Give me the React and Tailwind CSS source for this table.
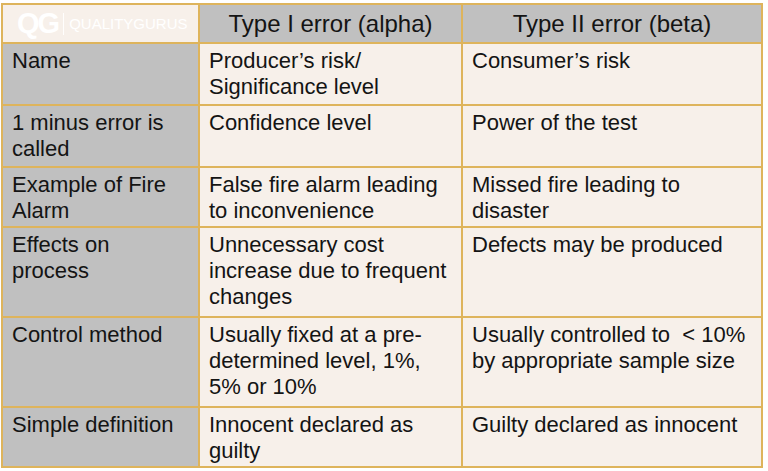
import React from "react";

const rows = [
  ["Name", "Producer’s risk/\nSignificance level", "Consumer’s risk"],
  ["1 minus error is\ncalled", "Confidence level", "Power of the test"],
  ["Example of Fire\nAlarm", "False fire alarm leading\nto inconvenience", "Missed fire leading to\ndisaster"],
  ["Effects on\nprocess", "Unnecessary cost\nincrease due to frequent\nchanges", "Defects may be produced"],
  ["Control method", "Usually fixed at a pre-\ndetermined level, 1%,\n5% or 10%", "Usually controlled to  < 10%\nby appropriate sample size"],
  ["Simple definition", "Innocent declared as\nguilty", "Guilty declared as innocent"],
];

function Cell({ text, gray }) {
  return (
    <div
      className={`${gray ? "bg-[#c0c0c0]" : "bg-[#f7f0ea]"} pl-[9px] pt-[4px] text-[22px] leading-[26px] text-[#141414] whitespace-pre`}
    >
      {text}
    </div>
  );
}

export default function App() {
  return (
    <div
      className="w-[768px] h-[471px] bg-white pt-[3px] pl-[1px]"
      style={{ fontFamily: '"Liberation Sans", Arial, sans-serif' }}
    >
      <div className="grid w-[762px] grid-cols-[195px_261px_298px] grid-rows-[37px_60px_60px_58px_88px_88px_58px] gap-[2px] p-[2px] bg-[#deb45c]">
        <div className="bg-[#f7f0ea] flex items-center pl-[14px]">
          <span className="text-white font-black text-[29px] tracking-[-2px] leading-none">QG</span>
          <span className="ml-[5px] w-px h-[22px] bg-white opacity-90"></span>
          <span className="ml-[5px] text-white text-[15px] leading-none">QUALITYGURUS</span>
        </div>
        <div className="bg-[#c0c0c0] flex items-center justify-center text-[24px] text-[#141414] pt-[1px]">
          Type I error (alpha)
        </div>
        <div className="bg-[#c0c0c0] flex items-center justify-center text-[24px] text-[#141414] pt-[1px]">
          Type II error (beta)
        </div>
        {rows.map((r, i) => (
          <React.Fragment key={i}>
            <Cell text={r[0]} gray />
            <Cell text={r[1]} />
            <Cell text={r[2]} />
          </React.Fragment>
        ))}
      </div>
    </div>
  );
}
